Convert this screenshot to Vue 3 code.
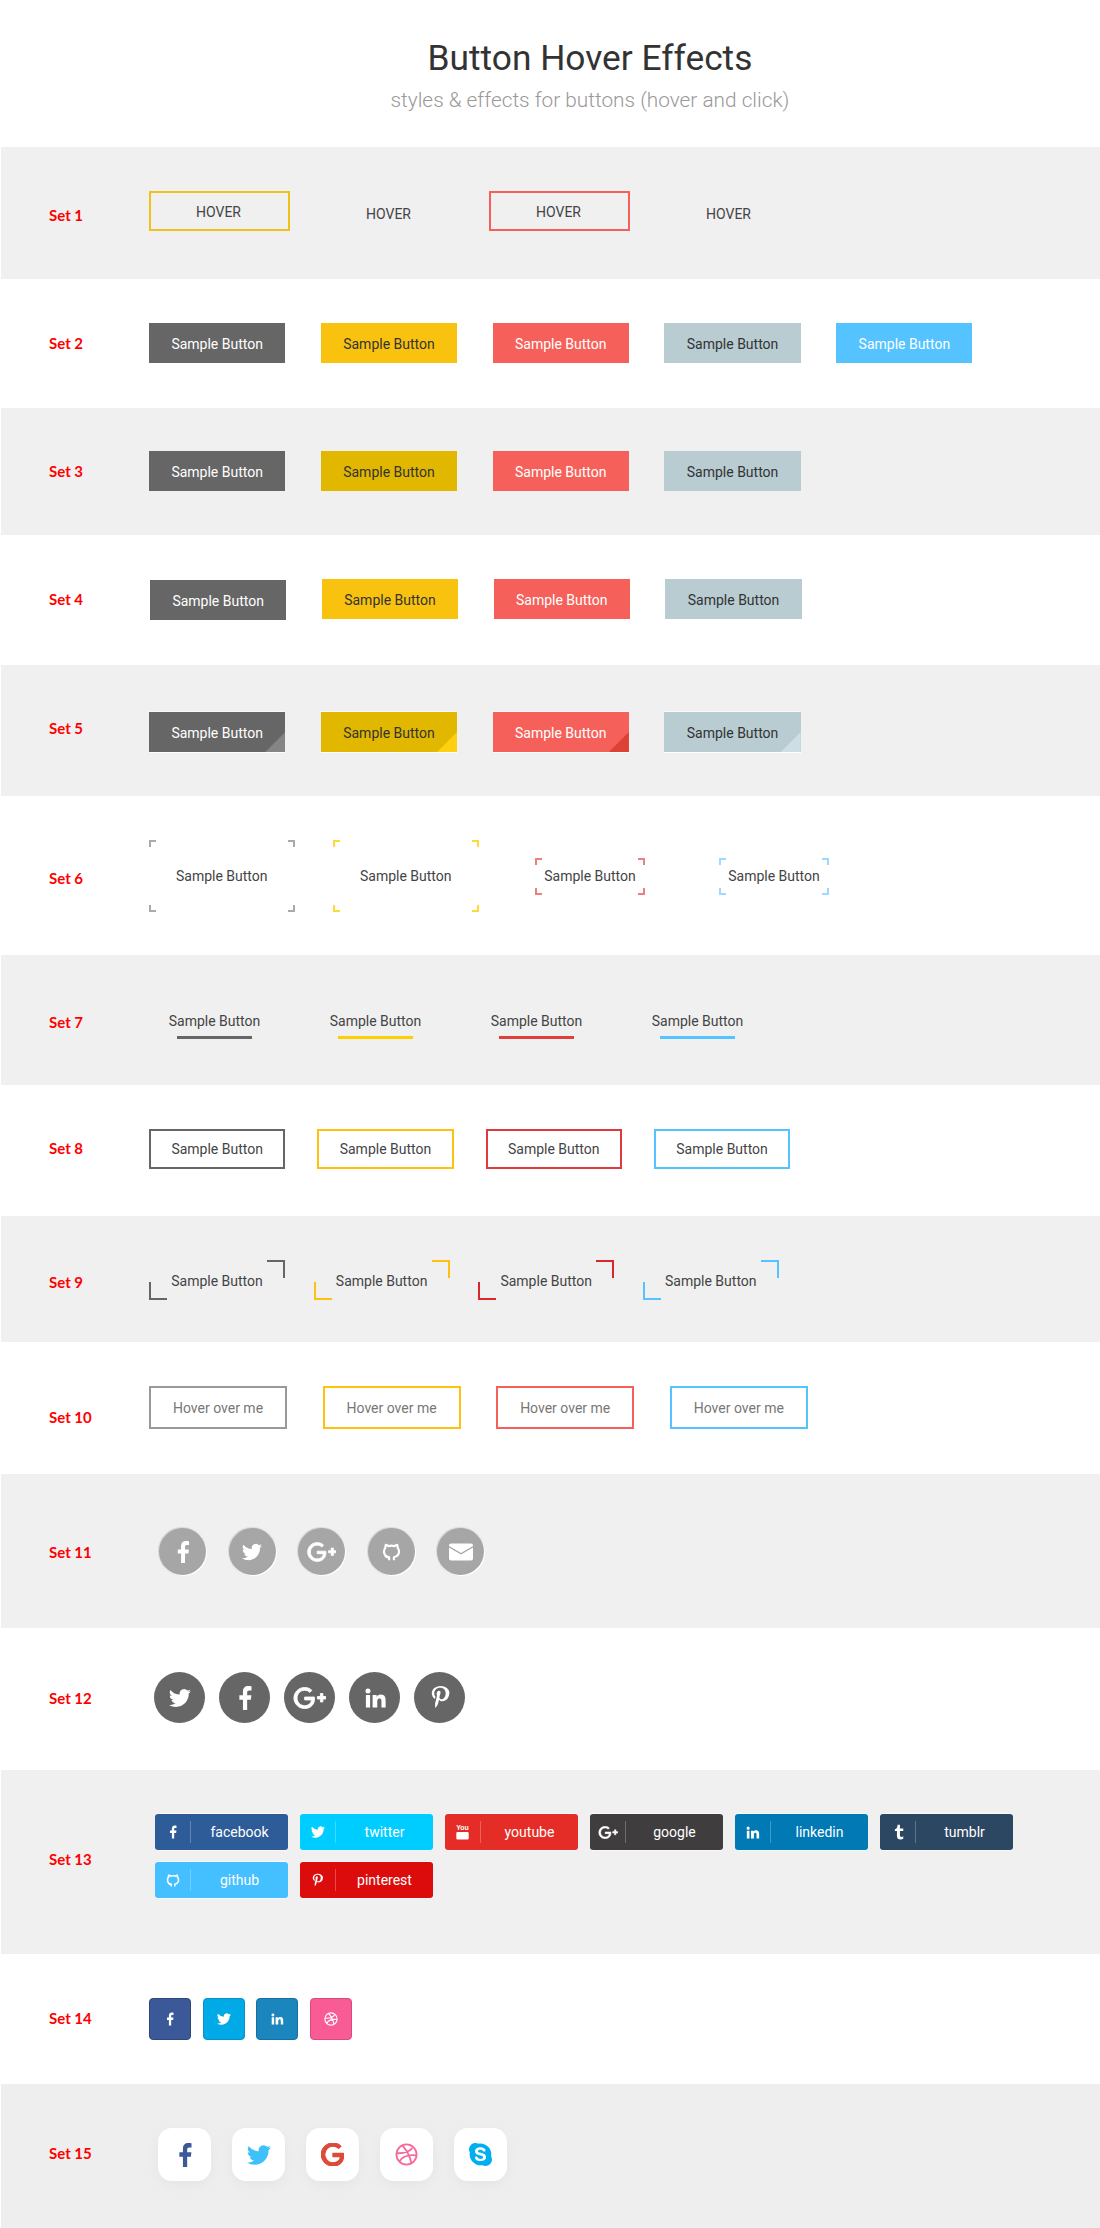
<script setup>
import { h } from 'vue'

const twitter = 'M23.95 4.57a10 10 0 0 1-2.82.78 4.96 4.96 0 0 0 2.16-2.72c-.95.56-2 .96-3.13 1.19a4.92 4.92 0 0 0-8.39 4.49A13.98 13.98 0 0 1 1.64 3.16a4.92 4.92 0 0 0 1.52 6.57 4.9 4.9 0 0 1-2.23-.62v.06a4.92 4.92 0 0 0 3.95 4.83 4.9 4.9 0 0 1-2.21.08 4.93 4.93 0 0 0 4.6 3.42A9.87 9.87 0 0 1 0 19.54a13.94 13.94 0 0 0 7.55 2.21c9.05 0 14-7.5 14-13.98 0-.21 0-.42-.02-.63a9.94 9.94 0 0 0 2.46-2.55z'
const gee = 'M12.48 10.92v3.28h7.84c-.24 1.84-.853 3.187-1.787 4.133-1.147 1.147-2.933 2.4-6.053 2.4-4.827 0-8.6-3.893-8.6-8.72s3.773-8.72 8.6-8.72c2.6 0 4.507 1.027 5.907 2.347l2.307-2.307C18.747 1.44 16.133 0 12.48 0 5.867 0 .307 5.387.307 12s5.56 12 12.173 12c3.573 0 6.267-1.173 8.373-3.36 2.16-2.16 2.84-5.213 2.84-7.667 0-.76-.053-1.467-.173-2.053H12.48z'
const icons = {
  fb: { d: 'M14 23v-9.5h3.4l.5-4H14V7c0-1.15.4-1.9 2-1.9h2V1.2C17.6 1.1 16.4 1 15 1c-2.9 0-4.9 1.8-4.9 5v3.5H6.8v4h3.3V23z' },
  tw: { d: twitter },
  g: { d: gee, sw: 1.3 },
  gp: { vb: '-.5 -.5 37 25', d: gee + 'M27 10.3h3.4V6.9h2.8v3.4h3.4v2.8h-3.4v3.4h-2.8v-3.4H27z', sw: 1 },
  gh: { s: true, sw: 2.7, d: 'M9 23v-3.8C5.2 18.4 2.5 15.6 2.5 12c0-1.9.7-3.6 1.9-4.9-.3-1.2-.2-2.3.3-3.4 1.3.2 2.5.8 3.5 1.6a11 11 0 0 1 7.6 0c1-.8 2.2-1.4 3.5-1.6.5 1.1.6 2.2.3 3.4 1.2 1.3 1.9 3 1.9 4.9 0 3.6-2.7 6.4-6.5 7.2V23M9 19.4c-2.2.5-3.8-.4-5-2' },
  env: { d: 'M2 3.5h20a2 2 0 0 1 2 2v.6L12 13 0 6.1v-.6a2 2 0 0 1 2-2zM0 7.6 12 14.5 24 7.6v10.9a2 2 0 0 1-2 2H2a2 2 0 0 1-2-2z' },
  in: { d: 'M4.98 2.5a2.5 2.5 0 1 1 0 5 2.5 2.5 0 0 1 0-5zM2.9 9h4.2v12.5H2.9zM9.6 9h4v1.7h.06c.56-1.05 1.92-2.15 3.96-2.15 4.23 0 5 2.78 5 6.4v6.55h-4.17v-5.8c0-1.4-.03-3.2-1.95-3.2-1.95 0-2.25 1.52-2.25 3.1v5.9H9.6z' },
  pin: { d: 'M12.6 1C7.2 1 4.4 4.6 4.4 7.7c0 1.8 1 4.2 2.6 4.9.2.1.4 0 .4-.2l.4-1.4c0-.2 0-.3-.1-.4-.6-.7-1-1.7-1-2.8 0-2.7 2-5.2 5.5-5.2 3 0 5 2 5 4.9 0 3.3-1.7 5.6-3.9 5.6-1.2 0-2.1-1-1.8-2.1.3-1.4 1-2.9 1-4 0-1-.5-1.7-1.5-1.7-1.2 0-2.1 1.2-2.1 2.9 0 1 .3 1.7.3 1.7l-1.5 6.2c-.4 1.4-.1 4.6 0 4.8 0 .1.2.2.3.1.1-.2 1.7-2.1 2.3-4.2l.8-3.2c.4.8 1.7 1.5 3 1.5 4 0 6.6-3.6 6.6-8.3C20.5 4.1 17.2 1 12.6 1z' },
  tum: { d: 'M14.9 1v5.6h5v4h-5v6.4c0 1.7.8 2.4 2.2 2.4.9 0 1.9-.3 2.8-.9v3.7c-1 .7-2.5 1.1-4.2 1.1-3.2 0-5.3-1.8-5.3-5.3v-7.4H7.3V8c2.8-.9 3.9-3.4 4.1-7z' },
  yt: { vb: '0 0 24 30', d: 'M2.6 15h18.8a2.2 2.2 0 0 1 2.2 2.2v9.6a2.2 2.2 0 0 1-2.2 2.2H2.6a2.2 2.2 0 0 1-2.2-2.2v-9.6A2.2 2.2 0 0 1 2.6 15z' },
  sk: { d: 'M12.069 18.874c-4.023 0-5.82-1.979-5.82-3.464 0-.765.561-1.296 1.333-1.296 1.723 0 1.273 2.477 4.487 2.477 1.641 0 2.55-.895 2.55-1.811 0-.551-.269-1.16-1.354-1.429l-3.576-.895c-2.88-.724-3.403-2.286-3.403-3.751 0-3.047 2.861-4.191 5.549-4.191 2.471 0 5.393 1.373 5.393 3.199 0 .784-.688 1.24-1.453 1.24-1.469 0-1.198-2.037-4.164-2.037-1.469 0-2.292.664-2.292 1.617s1.153 1.258 2.157 1.487l2.637.587c2.891.649 3.624 2.346 3.624 3.944 0 2.476-1.902 4.324-5.722 4.324m11.084-4.882c.12-.675.181-1.363.181-2.052 0-1.529-.301-3.012-.898-4.42-.569-1.348-1.395-2.562-2.427-3.596-1.049-1.033-2.247-1.856-3.595-2.426-1.318-.631-2.801-.93-4.328-.93-.72 0-1.444.07-2.143.204C8.91.274 7.829 0 6.731 0c-1.789 0-3.47.698-4.736 1.967C.729 3.235.032 4.923.032 6.716c0 1.143.292 2.265.844 3.258-.114.645-.172 1.299-.172 1.955 0 1.53.3 3.017.884 4.416.568 1.362 1.378 2.576 2.427 3.609 1.034 1.05 2.247 1.857 3.595 2.442 1.394.6 2.877.898 4.404.898.659 0 1.334-.06 1.977-.179 1.002.569 2.126.871 3.294.871 1.783 0 3.459-.69 4.733-1.963 1.259-1.259 1.962-2.951 1.962-4.749 0-1.138-.299-2.262-.853-3.266' },
  dr: { s: true, sw: 1.9, d: 'M12 1.5a10.5 10.5 0 1 0 0 21 10.5 10.5 0 0 0 0-21zM7.8 2.5c3.3 3.6 6 8 7.8 13 .6 1.7 1 3.4 1.2 5.2M1.6 10.6c6 .4 12.3-.8 16.6-5.2M4.6 19.3c2.4-4.2 8-7.6 17.8-6.4' }
}

const Icon = (props) => {
  const ic = icons[props.n]
  const kids = [h('path', {
    d: ic.d,
    fill: ic.s ? 'none' : 'currentColor',
    stroke: ic.sw ? 'currentColor' : 'none',
    'stroke-width': ic.sw || 0,
    'stroke-linejoin': 'round'
  })]
  if (props.n === 'yt') {
    kids.push(h('text', { x: 12, y: 12, 'text-anchor': 'middle', 'font-size': 13, 'font-weight': 700, 'font-family': 'Liberation Sans, sans-serif', fill: 'currentColor' }, 'You'))
  }
  return h('svg', { viewBox: ic.vb || '0 0 24 24', 'aria-hidden': 'true' }, kids)
}
Icon.props = ['n']

const grey = '#666666'
const set2 = [
  { bg: grey, fg: '#fff' }, { bg: '#f9c20f', fg: '#333' }, { bg: '#f5615a', fg: '#fff' },
  { bg: '#b8ccd2', fg: '#333' }, { bg: '#54c3ff', fg: '#fff' }
]
const set3 = [
  { bg: grey, fg: '#fff' }, { bg: '#e1b700', fg: '#333' }, { bg: '#f5615a', fg: '#fff' }, { bg: '#b8ccd2', fg: '#333' }
]
const set4 = [
  { bg: grey, fg: '#fff' }, { bg: '#f9c20f', fg: '#333' }, { bg: '#f5615a', fg: '#fff' }, { bg: '#b8ccd2', fg: '#333' }
]
const set5 = [
  { bg: grey, fg: '#fff', c: '#858585' }, { bg: '#e1b700', fg: '#333', c: '#ffd010' },
  { bg: '#f5615a', fg: '#fff', c: '#dd4136' }, { bg: '#b8ccd2', fg: '#333', c: '#cddfe5' }
]
const set6 = [
  { c: '#aaaaaa', big: true }, { c: '#ffd83b', big: true }, { c: '#ec8080', big: false }, { c: '#9fd9ff', big: false }
]
const set7 = [grey, '#ffd000', '#e03f3c', '#54c3ff']
const set8 = [grey, '#fdc20f', '#e0393e', '#54c3ff']
const set9 = [grey, '#fdc20f', '#d8282c', '#54c3ff']
const set10 = ['#999999', '#fdc20f', '#f5615a', '#54c3ff']
const set11 = ['fb', 'tw', 'gp', 'gh', 'env']
const set12 = ['tw', 'fb', 'gp', 'in', 'pin']
const set13 = [
  { i: 'fb', t: 'facebook', c: '#2e5c99' }, { i: 'tw', t: 'twitter', c: '#00cdff' },
  { i: 'yt', t: 'youtube', c: '#e52d27' }, { i: 'gp', t: 'google', c: '#3f3d3e' },
  { i: 'in', t: 'linkedin', c: '#0079b5' }, { i: 'tum', t: 'tumblr', c: '#2c4762' },
  { i: 'gh', t: 'github', c: '#44bfff' }, { i: 'pin', t: 'pinterest', c: '#dc0c0c' }
]
const set14 = [
  { i: 'fb', c: '#3b5998', b: '#2f4879' }, { i: 'tw', c: '#00aae6', b: '#0a8fc0' },
  { i: 'in', c: '#1a86bd', b: '#13709f' }, { i: 'dr', c: '#f95b95', b: '#d84a7e' }
]
const set15 = [
  { i: 'fb', c: '#3b5998' }, { i: 'tw', c: '#3ec0fb' }, { i: 'g', c: '#dc4a38' },
  { i: 'dr', c: '#f7699b' }, { i: 'sk', c: '#00aff0' }
]
</script>

<template>
  <main class="page">
    <header class="head">
      <h1>Button Hover Effects</h1>
      <p>styles &amp; effects for buttons (hover and click)</p>
    </header>

    <section class="set alt s1">
      <div class="lab">Set 1</div>
      <div class="row">
        <a class="hov yellow">HOVER</a>
        <a class="hov plain">HOVER</a>
        <a class="hov red">HOVER</a>
        <a class="hov plain">HOVER</a>
      </div>
    </section>

    <section class="set s2">
      <div class="lab">Set 2</div>
      <div class="row">
        <a v-for="b in set2" :key="b.bg" class="fill" :style="{ background: b.bg, color: b.fg }">Sample Button</a>
      </div>
    </section>

    <section class="set alt s3">
      <div class="lab">Set 3</div>
      <div class="row">
        <a v-for="b in set3" :key="b.bg" class="fill" :style="{ background: b.bg, color: b.fg }">Sample Button</a>
      </div>
    </section>

    <section class="set s4">
      <div class="lab">Set 4</div>
      <div class="row">
        <a v-for="b in set4" :key="b.bg" class="fill" :style="{ background: b.bg, color: b.fg }">Sample Button</a>
      </div>
    </section>

    <section class="set alt s5">
      <div class="lab">Set 5</div>
      <div class="row">
        <a v-for="b in set5" :key="b.bg" class="fill fold" :style="{ background: b.bg, color: b.fg, '--c': b.c }">Sample Button</a>
      </div>
    </section>

    <section class="set s6">
      <div class="lab">Set 6</div>
      <div class="row">
        <a v-for="b in set6" :key="b.c" class="crn" :class="{ big: b.big }" :style="{ '--c': b.c }">
          Sample Button
          <i class="tl"></i><i class="tr"></i><i class="bl"></i><i class="br"></i>
        </a>
      </div>
    </section>

    <section class="set alt s7">
      <div class="lab">Set 7</div>
      <div class="row">
        <a v-for="c in set7" :key="c" class="under" :style="{ '--c': c }">Sample Button</a>
      </div>
    </section>

    <section class="set s8">
      <div class="lab">Set 8</div>
      <div class="row">
        <a v-for="c in set8" :key="c" class="line" :style="{ borderColor: c }">Sample Button</a>
      </div>
    </section>

    <section class="set alt s9">
      <div class="lab">Set 9</div>
      <div class="row">
        <a v-for="c in set9" :key="c" class="diag" :style="{ '--c': c }">Sample Button</a>
      </div>
    </section>

    <section class="set s10">
      <div class="lab">Set 10</div>
      <div class="row">
        <a v-for="c in set10" :key="c" class="line over" :style="{ borderColor: c }">Hover over me</a>
      </div>
    </section>

    <section class="set alt s11">
      <div class="lab">Set 11</div>
      <div class="row">
        <a v-for="n in set11" :key="n" class="round"><Icon :n="n" :class="'i-' + n" /></a>
      </div>
    </section>

    <section class="set s12">
      <div class="lab">Set 12</div>
      <div class="row">
        <a v-for="n in set12" :key="n" class="dark"><Icon :n="n" :class="'i-' + n" /></a>
      </div>
    </section>

    <section class="set alt s13">
      <div class="lab">Set 13</div>
      <div class="row">
        <a v-for="b in set13" :key="b.t" class="soc" :style="{ background: b.c }">
          <span class="soc-i"><Icon :n="b.i" :class="'i-' + b.i" /></span>
          <span class="soc-t">{{ b.t }}</span>
        </a>
      </div>
    </section>

    <section class="set s14">
      <div class="lab">Set 14</div>
      <div class="row">
        <a v-for="b in set14" :key="b.i" class="tile" :style="{ background: b.c, borderColor: b.b }"><Icon :n="b.i" :class="'i-' + b.i" /></a>
      </div>
    </section>

    <section class="set alt2 s15">
      <div class="lab">Set 15</div>
      <div class="row">
        <a v-for="b in set15" :key="b.i" class="app" :style="{ color: b.c }"><Icon :n="b.i" :class="'i-' + b.i" /></a>
      </div>
    </section>
  </main>
</template>

<style>
html, body { margin: 0; background: #fff; }
</style>

<style scoped>
.page {
  width: 1100px;
  height: 2228px;
  overflow: hidden;
  font-family: Roboto, "Liberation Sans", sans-serif;
  font-size: 14px;
  color: #444;
}
.head {
  height: 147px;
  box-sizing: border-box;
  padding: 36px 0 0 80px;
  text-align: center;
}
.head h1 {
  margin: 0;
  font-size: 35.3px;
  line-height: 44px;
  font-weight: 400;
  color: #333;
}
.head p {
  margin: 0;
  font-size: 20.8px;
  line-height: 40px;
  font-weight: 300;
  color: #999;
}
.set { display: flex; margin-left: 1px; box-sizing: border-box; }
.alt { background: #f0f0f0; }
.alt2 { background: #eee; }
.lab {
  flex: none;
  box-sizing: border-box;
  width: 148px;
  padding-left: 48px;
  height: 20px;
  line-height: 20px;
  font-family: Lato, "Liberation Sans", sans-serif;
  font-weight: 700;
  font-size: 15px;
  color: #f00;
}
.row { display: flex; align-items: flex-start; }
a { display: flex; flex: none; align-items: center; justify-content: center; box-sizing: border-box; position: relative; }

.s1 { height: 132px; } .s1 .lab { margin-top: 58px; } .s1 .row { margin-top: 44px; gap: 29px; }
.s2 { height: 129px; } .s2 .lab { margin-top: 54px; } .s2 .row { margin-top: 44px; gap: 35.5px; }
.s3 { height: 127px; } .s3 .lab { margin-top: 53px; } .s3 .row { margin-top: 43px; gap: 35.5px; }
.s4 { height: 130px; } .s4 .lab { margin-top: 54px; } .s4 .row { margin-top: 44px; gap: 35.5px; margin-left: 1px; }
.s4 .fill:first-child { margin-top: 1px; }
.s5 { height: 131px; } .s5 .lab { margin-top: 53px; } .s5 .row { margin-top: 47px; gap: 35.5px; }
.s6 { height: 159px; } .s6 .lab { margin-top: 72px; } .s6 .row { margin-top: 44px; height: 72px; align-items: center; }
.s7 { height: 130px; } .s7 .lab { margin-top: 57px; } .s7 .row { margin-top: 46px; gap: 30px; }
.s8 { height: 131px; } .s8 .lab { margin-top: 53px; } .s8 .row { margin-top: 44px; gap: 32px; }
.s9 { height: 126px; } .s9 .lab { margin-top: 56px; } .s9 .row { margin-top: 44px; gap: 28.6px; }
.s10 { height: 132px; } .s10 .lab { margin-top: 65px; } .s10 .row { margin-top: 44px; gap: 35.6px; }
.s11 { height: 154px; } .s11 .lab { margin-top: 68px; } .s11 .row { margin: 54px 0 0 10px; gap: 22.6px; }
.s12 { height: 142px; } .s12 .lab { margin-top: 60px; } .s12 .row { margin: 44px 0 0 5px; gap: 14px; }
.s13 { height: 184px; } .s13 .lab { margin-top: 79px; } .s13 .row { margin: 44px 0 0 6px; gap: 12px; flex-wrap: wrap; width: 880px; align-content: flex-start; }
.s14 { height: 130px; } .s14 .lab { margin-top: 54px; } .s14 .row { margin-top: 44px; gap: 11.5px; }
.s15 { height: 144px; } .s15 .lab { margin-top: 59px; } .s15 .row { margin: 44px 0 0 9px; gap: 21px; }

.hov { width: 141px; height: 40px; font-size: 14px; color: #444; padding: 2px 2px 0 0; }
.hov.yellow { border: 2px solid #eec21a; }
.hov.red { border: 2px solid #f5615a; }
.hov.plain { padding-top: 5px; }

.fill { width: 136.3px; height: 40px; padding-top: 2px; }
.fold { overflow: hidden; box-shadow: 0 -1px 0 rgba(255,255,255,.6), 0 1px 0 #fff; }
.fold::after {
  content: "";
  position: absolute;
  right: 0;
  bottom: 0;
  width: 20px;
  height: 20px;
  background: var(--c);
  clip-path: polygon(100% 0, 100% 100%, 0 100%);
}

.crn { width: 110px; height: 37px; margin: 0 56px 0 18px; color: #444; }
.crn.big { width: 145.5px; height: 72px; margin: 0 38.5px 0 0; }
.crn i { position: absolute; width: 7px; height: 7px; border: 0 solid var(--c); box-sizing: border-box; }
.crn .tl { left: 0; top: 0; border-width: 2px 0 0 2px; }
.crn .tr { right: 0; top: 0; border-width: 2px 2px 0 0; }
.crn .bl { left: 0; bottom: 0; border-width: 0 0 2px 2px; }
.crn .br { right: 0; bottom: 0; border-width: 0 2px 2px 0; }

.under { width: 131px; height: 40px; color: #444; }
.under::after {
  content: "";
  position: absolute;
  left: 28px;
  width: 75px;
  bottom: 2px;
  height: 3px;
  background: var(--c);
}

.line { width: 136.3px; height: 40px; border: 2px solid; background: transparent; color: #444; }
.line.over { width: 138px; height: 43px; color: #777; }

.diag { width: 136px; height: 40px; color: #444; padding-top: 2px; }
.diag::before, .diag::after {
  content: "";
  position: absolute;
  width: 18px;
  height: 18px;
  box-sizing: border-box;
  border: 0 solid var(--c);
}
.diag::before { right: 0; top: 0; border-width: 2px 2px 0 0; }
.diag::after { left: 0; bottom: 0; border-width: 0 0 2px 2px; }

.round {
  width: 47px;
  height: 47px;
  border-radius: 50%;
  background: #a6a6a6;
  color: #fff;
  box-shadow: 1px 1px 0 #fff, -1px -1px 0 #d9d9d9, 1px -1px 0 #e8e8e8, -1px 1px 0 #e8e8e8;
}
.round .i-fb { width: 24px; height: 24px; }
.round .i-tw { width: 20px; height: 20px; }
.round .i-gp { width: 29px; height: 20px; }
.round .i-gh { width: 19px; height: 19px; }
.round .i-env { width: 24px; height: 24px; }

.dark { width: 51px; height: 51px; border-radius: 50%; background: #666; color: #fff; }
.dark .i-fb { width: 26px; height: 26px; }
.dark .i-tw { width: 22px; height: 22px; }
.dark .i-gp { width: 33px; height: 22px; }
.dark .i-in { width: 24px; height: 24px; }
.dark .i-pin { width: 26px; height: 26px; }

.soc { width: 133px; height: 36px; border-radius: 3px; color: #fff; justify-content: flex-start; box-shadow: 0 -1px 0 rgba(255,255,255,.7), 0 1px 0 rgba(255,255,255,.5); }
.soc-i { position: relative; width: 36px; height: 22px; display: flex; align-items: center; justify-content: center; border-right: 1px solid rgba(255,255,255,.25); box-sizing: border-box; }
.soc-t { flex: 1; text-align: center; font-size: 14px; }
.soc svg { width: 14px; height: 14px; }
.soc .i-gp { width: 20px; height: 13px; }
.soc .i-yt { width: 13px; height: 16px; }
.soc .i-in { width: 15px; height: 15px; }
.soc .i-tum { width: 16px; height: 16px; }
.soc .i-pin { width: 15px; height: 15px; }

.tile { width: 42px; height: 42px; border-radius: 4px; border: 1px solid; color: #fff; }
.tile svg { width: 14px; height: 14px; }

.app { width: 53px; height: 53px; border-radius: 14px; background: #fff; box-shadow: 0 4px 14px rgba(0,0,0,.04); }
.app svg { width: 23px; height: 23px; }
.app .i-fb { width: 26px; height: 26px; }
.app .i-tw { width: 24px; height: 24px; }
</style>
